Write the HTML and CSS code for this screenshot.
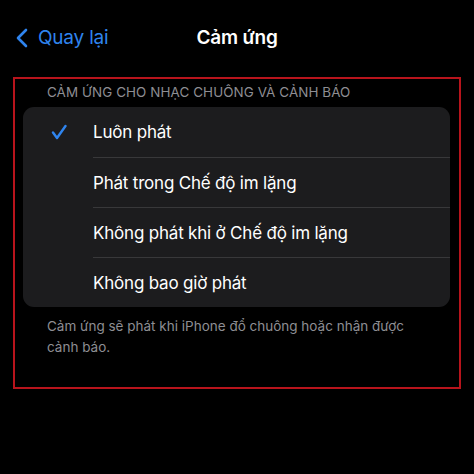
FILE: index.html
```html
<!DOCTYPE html>
<html lang="vi">
<head>
  <meta charset="UTF-8">
  <meta name="viewport" content="width=device-width, initial-scale=1.0">
  <title>Cảm ứng</title>
  <link rel="stylesheet" href="styles.css">
</head>
<body>
  <!-- Thanh điều hướng -->
  <nav class="navbar">
    <a href="#" class="back-link">
      <svg class="chevron" width="12" height="20" viewBox="0 0 12 20">
        <path d="M10 2 L2 10 L10 18" fill="none" stroke="#2f84ee" stroke-width="2.6" stroke-linecap="round" stroke-linejoin="round"/>
      </svg>
      <span>Quay lại</span>
    </a>
    <h1 class="nav-title">Cảm ứng</h1>
  </nav>

  <!-- Nội dung chính -->
  <main class="highlight-box">
    <div class="section-header">CẢM ỨNG CHO NHẠC CHUÔNG VÀ CẢNH BÁO</div>
    <ul class="option-list">
      <li class="option selected">
        <span class="check">
          <svg width="16" height="16" viewBox="0 0 16 16">
            <path d="M2 8.5 L6 14 L14.5 2" fill="none" stroke="#2f84ee" stroke-width="2.4" stroke-linecap="round" stroke-linejoin="round"/>
          </svg>
        </span>
        <span class="option-label">Luôn phát</span>
      </li>
      <li class="option">
        <span class="check"></span>
        <span class="option-label">Phát trong Chế độ im lặng</span>
      </li>
      <li class="option">
        <span class="check"></span>
        <span class="option-label">Không phát khi ở Chế độ im lặng</span>
      </li>
      <li class="option">
        <span class="check"></span>
        <span class="option-label">Không bao giờ phát</span>
      </li>
    </ul>
    <p class="section-footer">Cảm ứng sẽ phát khi iPhone đổ chuông hoặc nhận được cảnh báo.</p>
  </main>
</body>
</html>
```

FILE: styles.css
```css
/* Reset */
* {
  margin: 0;
  padding: 0;
  box-sizing: border-box;
}

body {
  font-family: 'Inter', 'Roboto', sans-serif;
  background-color: #000000;
  color: #ffffff;
  width: 474px;
  height: 474px;
  overflow: hidden;
}

/* Navbar */
.navbar {
  position: relative;
  height: 72px;
  display: flex;
  align-items: center;
  justify-content: center;
  padding-top: 2px;
}

.back-link {
  position: absolute;
  left: 16px;
  top: 26px;
  display: flex;
  align-items: center;
  gap: 10px;
  color: #2f84ee;
  text-decoration: none;
  font-size: 19px;
  letter-spacing: -0.2px;
}

.nav-title {
  font-size: 19px;
  font-weight: 600;
  letter-spacing: -0.2px;
}

/* Khung viền đỏ */
.highlight-box {
  margin: 5px 13px 0;
  height: 312px;
  border: 2px solid #b8141c;
  padding: 0 9px 0 8px;
}

.section-header {
  padding: 5px 0 0 24px;
  height: 28px;
  font-size: 13.4px;
  color: #8e8e93;
  letter-spacing: 0.1px;
}

.option-list {
  list-style: none;
  background-color: #1c1c1e;
  border-radius: 11px;
  overflow: hidden;
}

.option {
  display: flex;
  align-items: center;
  height: 50px;
}

.check {
  width: 70px;
  display: flex;
  justify-content: center;
  padding-left: 2px;
}

.option-label {
  flex: 1;
  height: 100%;
  display: flex;
  align-items: center;
  font-size: 17px;
  letter-spacing: -0.2px;
  border-top: 1px solid #38383a;
}

.option:first-child .option-label {
  border-top: none;
}

.section-footer {
  padding: 9px 30px 0 24px;
  font-size: 13.5px;
  line-height: 21px;
  color: #8e8e93;
}
```
